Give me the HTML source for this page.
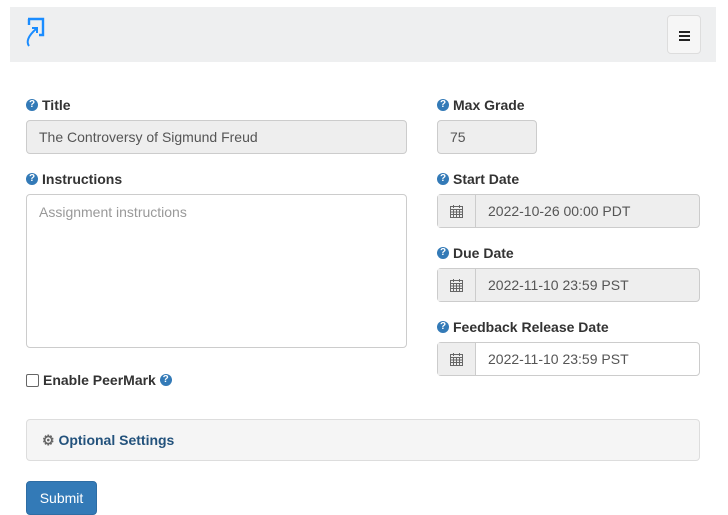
<!DOCTYPE html>
<html><head><style>
*{box-sizing:border-box}
body{margin:0;width:728px;height:515px;background:#fff;font-family:"Liberation Sans",Arial,sans-serif;font-size:14px;color:#333;position:relative;overflow:hidden}
.abs{position:absolute}
.nav{left:10px;top:7px;width:706px;height:55px;background:#eeeff0}
.hb{left:667px;top:15px;width:34px;height:39px;border:1px solid #ddd;border-radius:4px;background:#f6f6f6}
.hb i{position:absolute;left:11px;width:11px;height:2px;background:#222}
.lbl{font-weight:bold;font-size:14px;line-height:16px;display:flex;align-items:center;white-space:nowrap}
.q{display:inline-block;width:12px;height:12px;border-radius:50%;background:#337ab7;color:#fff;font-size:10px;line-height:12px;text-align:center;font-weight:bold;margin-right:4px}
.inp{border:1px solid #ccc;border-radius:4px;background:#eee;height:34px;padding:0 12px;line-height:32px;color:#555}
.grp{height:34px;border:1px solid #ccc;border-radius:4px;display:flex}
.grp .ad{width:38px;background:#eee;border-right:1px solid #ccc;display:flex;align-items:center;justify-content:center}
.grp .tx{flex:1;padding-left:12px;line-height:32px;color:#555}
</style></head><body>
<div class="abs nav"></div>
<svg class="abs" style="left:24px;top:16px" width="22" height="32" viewBox="0 0 22 32"><path d="M4 3H19V19H15" fill="none" stroke="#1a8cff" stroke-width="2.4"/><path d="M5 3V9" stroke="#1a8cff" stroke-width="2.4"/><path d="M5 30C2 26 4 20 12 13" fill="none" stroke="#1a8cff" stroke-width="2"/><path d="M8 12H13V17" fill="none" stroke="#1a8cff" stroke-width="2"/></svg>
<div class="abs hb"><i style="top:15px"></i><i style="top:19px"></i><i style="top:23px"></i></div>

<div class="abs lbl" style="left:26px;top:97px"><span class="q">?</span>Title</div>
<div class="abs inp" style="left:26px;top:120px;width:381px;">The Controversy of Sigmund Freud</div>
<div class="abs lbl" style="left:26px;top:171px"><span class="q">?</span>Instructions</div>
<div class="abs" style="left:26px;top:194px;width:381px;height:154px;border:1px solid #ccc;border-radius:4px;padding:9px 12px;color:#999">Assignment instructions</div>
<div class="abs lbl" style="left:26px;top:372px"><span style="display:inline-block;width:13px;height:13px;border:1px solid #666;border-radius:2px;margin-right:4px"></span>Enable PeerMark&nbsp;<span class="q">?</span></div>

<div class="abs lbl" style="left:437px;top:97px"><span class="q">?</span>Max Grade</div>
<div class="abs inp" style="left:437px;top:120px;width:100px;">75</div>
<div class="abs lbl" style="left:437px;top:171px"><span class="q">?</span>Start Date</div>
<div class="abs grp" style="left:437px;top:194px;width:263px;background:#eee"><div class="ad"><svg width="13" height="13" viewBox="0 0 13 13"><rect x="0.5" y="1.5" width="12" height="11" fill="none" stroke="#666"/><path d="M0.5 4.5H12.5M0.5 7H12.5M0.5 9.5H12.5M3.5 4.5V12.5M6.5 4.5V12.5M9.5 4.5V12.5M3.5 0V3M9.5 0V3" stroke="#666"/></svg></div><div class="tx">2022-10-26 00:00 PDT</div></div>
<div class="abs lbl" style="left:437px;top:245px"><span class="q">?</span>Due Date</div>
<div class="abs grp" style="left:437px;top:268px;width:263px;background:#eee"><div class="ad"><svg width="13" height="13" viewBox="0 0 13 13"><rect x="0.5" y="1.5" width="12" height="11" fill="none" stroke="#666"/><path d="M0.5 4.5H12.5M0.5 7H12.5M0.5 9.5H12.5M3.5 4.5V12.5M6.5 4.5V12.5M9.5 4.5V12.5M3.5 0V3M9.5 0V3" stroke="#666"/></svg></div><div class="tx">2022-11-10 23:59 PST</div></div>
<div class="abs lbl" style="left:437px;top:319px"><span class="q">?</span>Feedback Release Date</div>
<div class="abs grp" style="left:437px;top:342px;width:263px;background:#fff"><div class="ad"><svg width="13" height="13" viewBox="0 0 13 13"><rect x="0.5" y="1.5" width="12" height="11" fill="none" stroke="#666"/><path d="M0.5 4.5H12.5M0.5 7H12.5M0.5 9.5H12.5M3.5 4.5V12.5M6.5 4.5V12.5M9.5 4.5V12.5M3.5 0V3M9.5 0V3" stroke="#666"/></svg></div><div class="tx">2022-11-10 23:59 PST</div></div>

<div class="abs" style="left:26px;top:419px;width:674px;height:42px;background:#f5f5f5;border:1px solid #ddd;border-radius:4px;padding:12px 15px;font-weight:bold;color:#23527c;line-height:16px"><span style="color:#666">⚙</span> Optional Settings</div>
<div class="abs" style="left:26px;top:481px;width:71px;height:34px;background:#337ab7;border:1px solid #2e6da4;border-radius:4px;color:#fff;text-align:center;line-height:32px">Submit</div>
</body></html>
